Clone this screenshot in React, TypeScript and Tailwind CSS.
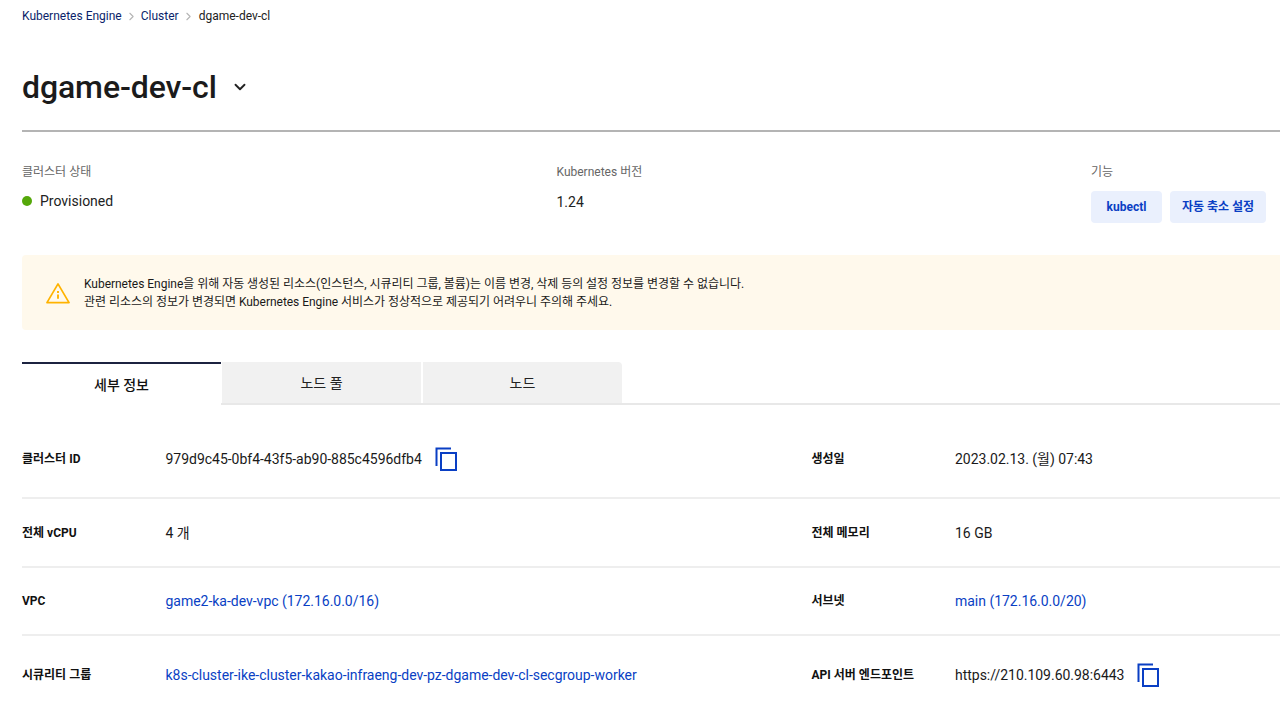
import { ChevronDown, ChevronRight } from "lucide-react";

const font = "font-['Roboto','Noto_Sans_CJK_KR',sans-serif]";

function CopyIcon() {
  return (
    <svg width="24" height="24" viewBox="0 0 24 24" fill="none" stroke="#0a3fc4" strokeWidth="2" className="shrink-0">
      <path d="M1.5 19V1.5H16" />
      <rect x="6" y="6" width="15" height="17" />
    </svg>
  );
}

function Row({ label, value, label2, value2, height, last }: {
  label: string;
  value: React.ReactNode;
  label2: string;
  value2: React.ReactNode;
  height: string;
  last?: boolean;
}) {
  return (
    <div className={`flex items-center ${height} ${last ? "" : "border-b-2 border-[#eeeeee]"}`}>
      <div className="w-[143.5px] text-xs font-bold text-[#111111]">{label}</div>
      <div className="w-[646px] flex items-center text-sm tracking-[-0.02px] text-[#1a1a1a]">{value}</div>
      <div className="w-[143.5px] text-xs font-bold text-[#111111]">{label2}</div>
      <div className="flex items-center text-sm tracking-[-0.02px] text-[#1a1a1a]">{value2}</div>
    </div>
  );
}

export default function App() {
  return (
    <div className={`${font} w-[1280px] h-[713px] overflow-hidden bg-white pl-[22px]`}>
      <nav className="flex items-center h-[32px] text-xs text-[#0b1f6b]">
        <span>Kubernetes Engine</span>
        <ChevronRight className="mx-[3px] h-[13px] w-[13px] text-[#b5b5b5]" />
        <span>Cluster</span>
        <ChevronRight className="ml-[3px] mr-[4px] h-[13px] w-[13px] text-[#b5b5b5]" />
        <span className="text-[#222222]">dgame-dev-cl</span>
      </nav>

      <div className="flex items-center h-[100px] border-b-2 border-[#b4b4b4] pt-[12px] mb-[30px]">
        <h1 className="text-[32px] font-medium tracking-[-0.1px] text-[#1b1b1b]">dgame-dev-cl</h1>
        <ChevronDown className="ml-[14px] h-[18px] w-[18px] text-[#222222]" strokeWidth={2.5} />
      </div>

      <div className="grid grid-cols-[534.5px_534.5px_200px] h-[93px]">
        <div>
          <div className="text-xs leading-[20px] text-[#666666]">클러스터 상태</div>
          <div className="mt-[9px] flex items-center text-sm leading-[20px] text-[#222222]">
            <span className="mr-[8px] h-[10px] w-[10px] rounded-full bg-[#55a80a]" />
            Provisioned
          </div>
        </div>
        <div>
          <div className="text-xs leading-[20px] text-[#666666]">Kubernetes 버전</div>
          <div className="mt-[10px] text-sm leading-[20px] text-[#222222]">1.24</div>
        </div>
        <div>
          <div className="text-xs leading-[20px] text-[#666666]">기능</div>
          <div className="mt-[9px] flex gap-[8px]">
            <span className="flex h-[32px] w-[71px] items-center justify-center rounded-[4px] bg-[#eaf0fd] text-xs font-bold text-[#0a3fc4]">kubectl</span>
            <span className="flex h-[32px] w-[96px] items-center justify-center rounded-[4px] bg-[#eaf0fd] text-xs font-bold text-[#0a3fc4]">자동 축소 설정</span>
          </div>
        </div>
      </div>

      <div className="flex h-[75px] w-[1400px] items-center rounded-[4px] bg-[#fff9ec] pl-[24px]">
        <svg width="24" height="24" viewBox="0 0 25 24" fill="none" stroke="#ffb300" strokeWidth="1.8" strokeLinejoin="round" className="mr-[14px] shrink-0">
          <path d="M12.5 2.5 24 22H1Z" />
          <path d="M12.5 10v2M12.5 13.5V18" strokeWidth="2" />
        </svg>
        <div className="pt-[1px] text-xs leading-[18px] tracking-[-0.03px] text-[#1a1a1a]">
          <p>Kubernetes Engine을 위해 자동 생성된 리소스(인스턴스, 시큐리티 그룹, 볼륨)는 이름 변경, 삭제 등의 설정 정보를 변경할 수 없습니다.</p>
          <p>관련 리소스의 정보가 변경되면 Kubernetes Engine 서비스가 정상적으로 제공되기 어려우니 주의해 주세요.</p>
        </div>
      </div>

      <div className="mt-[32px] flex h-[43px] border-b-2 border-[#e8e8e8] text-sm">
        <div className="flex h-[43px] w-[199px] items-center justify-center border-t-2 border-[#1c2340] bg-white font-medium text-[#111111]">세부 정보</div>
        <div className="ml-[1px] flex h-[41px] w-[199px] items-center justify-center bg-[#f1f1f1] text-[#222222]">노드 풀</div>
        <div className="ml-[2px] flex h-[41px] w-[199px] items-center justify-center rounded-tr-[4px] bg-[#f1f1f1] text-[#222222]">노드</div>
      </div>

      <div className="mt-[15px]">
        <Row
          height="h-[79px]"
          label="클러스터 ID"
          value={<><span>979d9c45-0bf4-43f5-ab90-885c4596dfb4</span><span className="ml-[13px]"><CopyIcon /></span></>}
          label2="생성일"
          value2="2023.02.13. (월) 07:43"
        />
        <Row height="h-[69px]" label="전체 vCPU" value="4 개" label2="전체 메모리" value2="16 GB" />
        <Row
          height="h-[68px]"
          label="VPC"
          value={<span className="text-[#0a3fc4]">game2-ka-dev-vpc (172.16.0.0/16)</span>}
          label2="서브넷"
          value2={<span className="text-[#0a3fc4]">main (172.16.0.0/20)</span>}
        />
        <Row
          height="h-[78px]"
          last
          label="시큐리티 그룹"
          value={<span className="text-[#0a3fc4]">k8s-cluster-ike-cluster-kakao-infraeng-dev-pz-dgame-dev-cl-secgroup-worker</span>}
          label2="API 서버 엔드포인트"
          value2={<><span>https://210.109.60.98:6443</span><span className="ml-[13px]"><CopyIcon /></span></>}
        />
      </div>
    </div>
  );
}
